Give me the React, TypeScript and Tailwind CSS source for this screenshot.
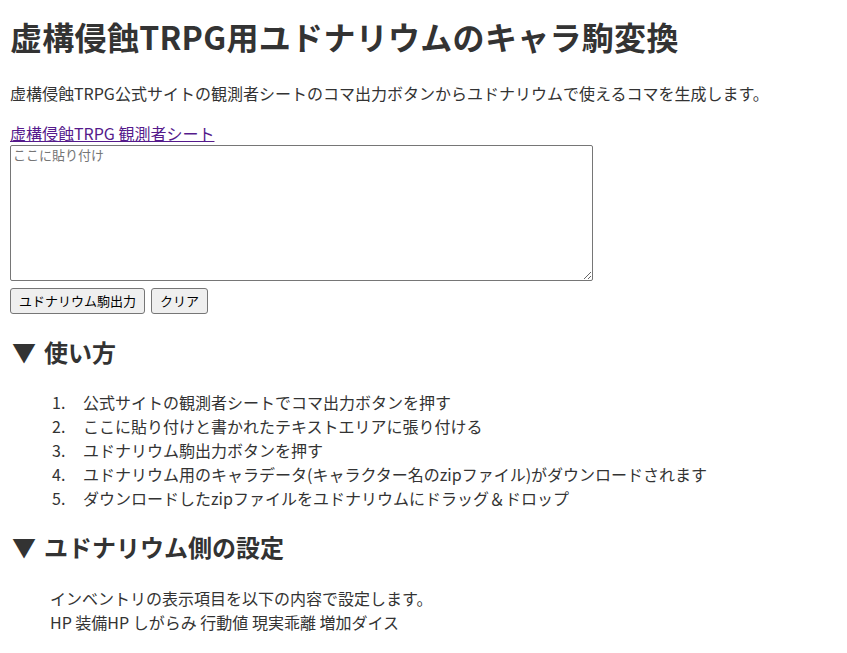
import { useState } from "react";

const steps = [
  "公式サイトの観測者シートでコマ出力ボタンを押す",
  "ここに貼り付けと書かれたテキストエリアに張り付ける",
  "ユドナリウム駒出力ボタンを押す",
  "ユドナリウム用のキャラデータ(キャラクター名のzipファイル)がダウンロードされます",
  "ダウンロードしたzipファイルをユドナリウムにドラッグ＆ドロップ",
];

export default function App() {
  const [text, setText] = useState("");

  return (
    <div className="min-h-screen bg-white px-[10px] text-[#333] font-['Noto_Sans_CJK_JP','Noto_Sans',sans-serif]">
      <h1 className="pt-[12px] text-[32px] font-bold leading-[48px] tracking-[0.3px]">
        虚構侵蝕TRPG用ユドナリウムのキャラ駒変換
      </h1>
      <p className="mt-[21px] text-base leading-[24px]">
        虚構侵蝕TRPG公式サイトの観測者シートのコマ出力ボタンからユドナリウムで使えるコマを生成します。
      </p>
      <div className="mt-[16px] leading-[24px]">
        <a href="#" className="text-[#551a8b] underline">
          虚構侵蝕TRPG 観測者シート
        </a>
      </div>
      <textarea
        value={text}
        onChange={(e) => setText(e.target.value)}
        placeholder="ここに貼り付け"
        className="block h-[136px] w-[583px] rounded-[2px] border border-[#767676] px-[2px] py-[1px] text-[13px] leading-[16px] placeholder:text-[#757575]"
      />
      {/* ボタン */}
      <div className="mt-[7px] flex gap-[6px]">
        <button className="h-[26px] rounded-[3px] border border-[#767676] bg-[#efefef] px-[8px] text-[13px] text-black">
          ユドナリウム駒出力
        </button>
        <button
          onClick={() => setText("")}
          className="h-[26px] rounded-[3px] border border-[#767676] bg-[#efefef] px-[8px] text-[13px] text-black"
        >
          クリア
        </button>
      </div>

      <h2 className="mt-[20px] text-[24px] font-bold leading-[36px]">
        <span className="mr-[8px] pl-[2px]">▼</span>使い方
      </h2>
      <ol className="mt-[20px] pl-[40px]">
        {steps.map((s, i) => (
          <li key={i} className="flex text-base leading-[24px]">
            <span className="w-[33px] pl-[2px]">{i + 1}.</span>
            <span>{s}</span>
          </li>
        ))}
      </ol>

      <h2 className="mt-[19px] text-[24px] font-bold leading-[36px]">
        <span className="mr-[8px] pl-[2px]">▼</span>ユドナリウム側の設定
      </h2>
      <div className="mt-[21px] pl-[40px] text-base leading-[24px]">
        <p>インベントリの表示項目を以下の内容で設定します。</p>
        <p>HP 装備HP しがらみ 行動値 現実乖離 増加ダイス</p>
      </div>
    </div>
  );
}
